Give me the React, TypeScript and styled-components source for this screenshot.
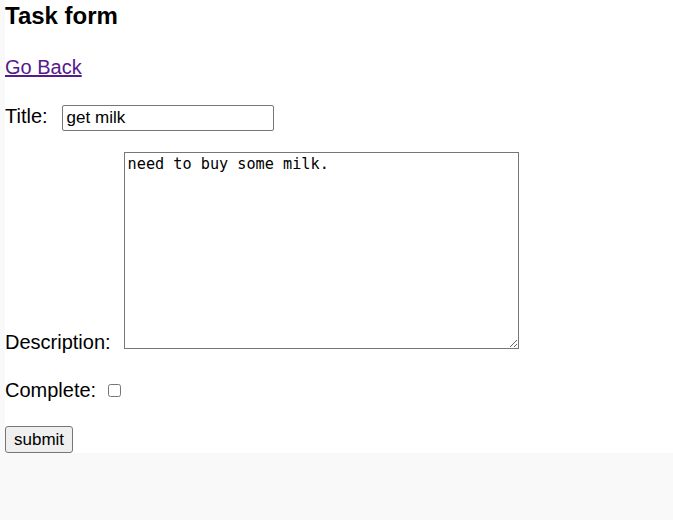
import React from "react";
import styled, { createGlobalStyle } from "styled-components";

const Global = createGlobalStyle`
  html, body {
    margin: 0;
    padding: 0;
    background: #f9f9f9;
  }
`;

const Page = styled.div`
  margin-left: 5px;
  background: #ffffff;
  color: #000;
  font-family: "Comic Sans MS", "Liberation Sans", sans-serif;
  font-size: 20px;
  line-height: 28px;
`;

const Heading = styled.h1`
  margin: 0;
  font-size: 24px;
  line-height: 32px;
  font-weight: bold;
`;

const Row = styled.div<{ $gap: number }>`
  margin-top: ${(p) => p.$gap}px;
`;

const BackLink = styled.a`
  color: #551a8b;
  text-decoration: underline;
`;

const Label = styled.label``;

const TextInput = styled.input`
  font-family: "Liberation Sans", Arial, sans-serif;
  font-size: 17px;
  width: 212px;
  height: 26px;
  box-sizing: border-box;
  padding: 1px 4px;
  border: 1px solid #767676;
  border-radius: 2px;
  margin: 0 0 0 14px;
  vertical-align: baseline;
`;

const TextArea = styled.textarea`
  font-family: "DejaVu Sans Mono", "Liberation Mono", monospace;
  font-size: 15.2px;
  width: 395px;
  height: 197px;
  box-sizing: border-box;
  padding: 2px 3px;
  border: 1px solid #767676;
  margin: 0 0 0 13px;
  resize: both;
`;

const Check = styled.input`
  width: 13px;
  height: 13px;
  margin: 0 0 0 12px;
`;

const SubmitButton = styled.button`
  font-family: "Liberation Sans", Arial, sans-serif;
  font-size: 17px;
  height: 27px;
  padding: 1px 8px;
  border: 1px solid #767676;
  border-radius: 3px;
  background: #efefef;
  color: #000;
  display: block;
`;

export default function App() {
  return (
    <>
      <Global />
      <Page>
        <Heading>Task form</Heading>
        <Row $gap={21}>
          <BackLink href="#">Go Back</BackLink>
        </Row>
        <Row $gap={21}>
          <Label>
            Title:
            <TextInput type="text" defaultValue="get milk" />
          </Label>
        </Row>
        <Row $gap={21}>
          <Label>
            Description:
            <TextArea defaultValue="need to buy some milk." />
          </Label>
        </Row>
        <Row $gap={20}>
          <Label>
            Complete:
            <Check type="checkbox" />
          </Label>
        </Row>
        <Row $gap={22}>
          <SubmitButton type="submit">submit</SubmitButton>
        </Row>
      </Page>
    </>
  );
}
